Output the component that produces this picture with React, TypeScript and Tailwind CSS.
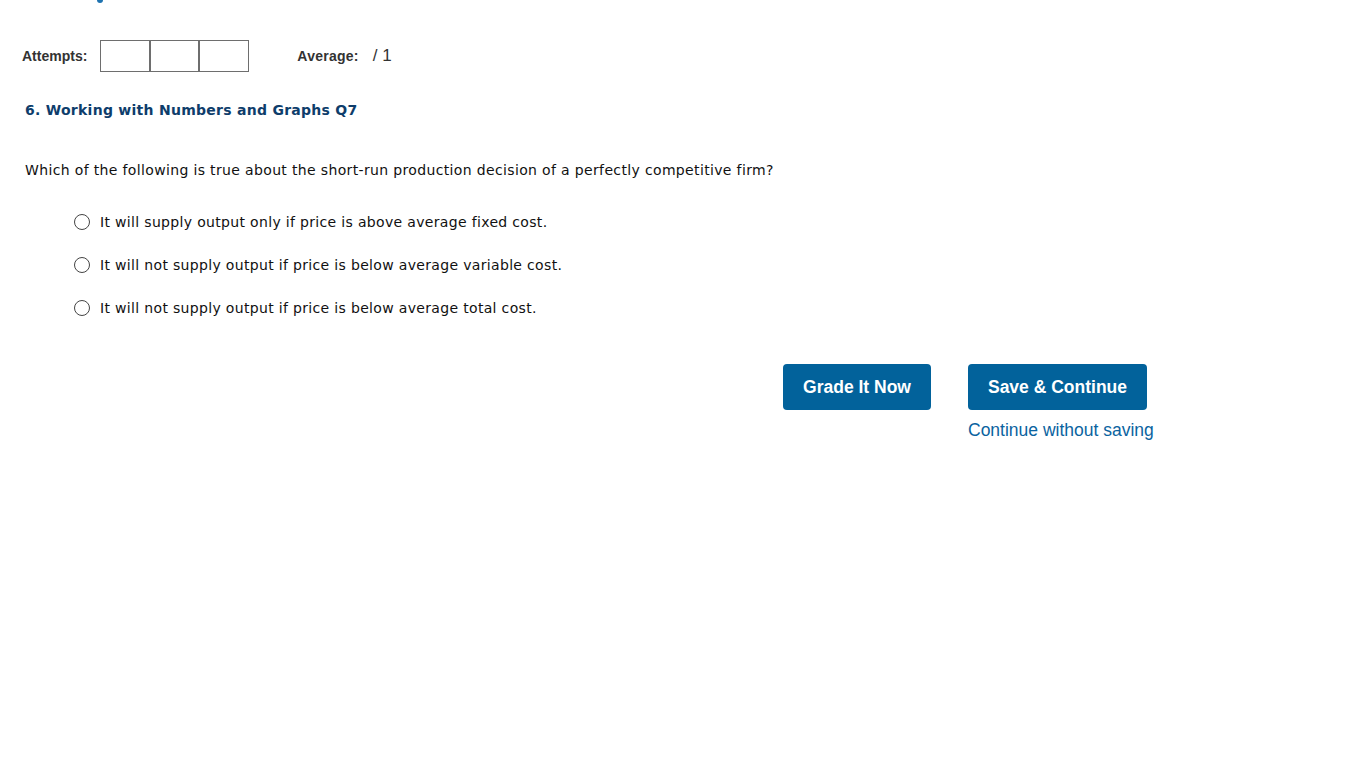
import React from "react";

const options = [
  "It will supply output only if price is above average fixed cost.",
  "It will not supply output if price is below average variable cost.",
  "It will not supply output if price is below average total cost.",
];

export default function App() {
  return (
    <div className="min-h-[764px] w-full bg-white">
      <div className="flex h-[3px]">
        <span className="ml-[97px] h-[3px] w-[6px] rounded-b-sm bg-[#1f73b0]" />
      </div>

      <div
        className="mt-[37px] flex items-center pl-[22px]"
        style={{ fontFamily: '"Liberation Sans", Arial, sans-serif' }}
      >
        <span className="text-[14px] font-bold text-[#333]">Attempts:</span>
        <div className="ml-[13px] flex">
          <div className="h-[32px] w-[50px] border border-[#6e6e6e]" />
          <div className="h-[32px] w-[49px] border border-[#6e6e6e]" />
          <div className="h-[32px] w-[50px] border border-[#6e6e6e]" />
        </div>
        <span className="ml-[48px] text-[14px] font-bold tracking-[0.25px] text-[#333]">
          Average:
        </span>
        <span className="ml-[14px] text-[17px] text-[#333]">/ 1</span>
      </div>

      <div
        className="pl-[25px] text-[#222]"
        style={{ fontFamily: 'Verdana, "DejaVu Sans", sans-serif' }}
      >
        <h2 className="mt-[28px] text-[14px] font-bold leading-[20px] tracking-[0.27px] text-[#0e3d6b]">
          6. Working with Numbers and Graphs Q7
        </h2>
        <p className="mt-[40px] text-[14px] leading-[20px] tracking-[0.35px] text-[#111]">
          Which of the following is true about the short-run production decision of a perfectly
          competitive firm?
        </p>
        <div className="mt-[31.5px] flex flex-col gap-[23.3px] pl-[49px]">
          {options.map((o) => (
            <label key={o} className="flex items-center">
              <span className="h-[16px] w-[16px] rounded-full border border-[#444] bg-white" />
              <span className="ml-[10px] text-[14px] leading-[20px] tracking-[0.33px] text-[#111]">
                {o}
              </span>
            </label>
          ))}
        </div>
      </div>

      <div
        className="mt-[46px] flex w-[1154px] justify-end gap-[37px]"
        style={{ fontFamily: '"Liberation Sans", Arial, sans-serif' }}
      >
        <button className="flex h-[46px] w-[148px] items-center justify-center rounded-[4px] bg-[#02629b] text-[17.5px] font-bold text-white">
          Grade It Now
        </button>
        <div className="flex w-[186px] flex-col items-start">
          <button className="flex h-[46px] w-[179px] items-center justify-center rounded-[4px] bg-[#02629b] text-[17.5px] font-bold text-white">
            Save &amp; Continue
          </button>
          <a className="mt-[8px] text-[17.5px] leading-[24px] text-[#0a63a0]" href="#">
            Continue without saving
          </a>
        </div>
      </div>
    </div>
  );
}
